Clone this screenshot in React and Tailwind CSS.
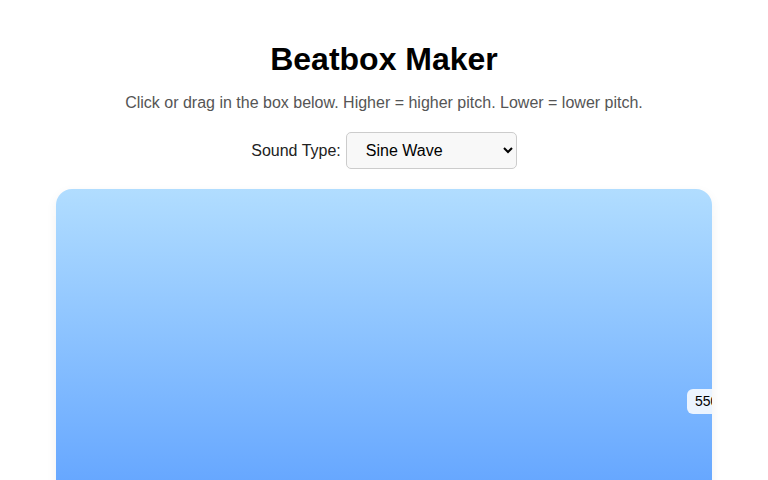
import React, { useState } from 'react'

function App() {
    const [sound, setSound] = useState('sine')

    return <div className="min-h-screen bg-white text-center" style={{ fontFamily: '"Liberation Sans", Arial, sans-serif' }}>
        <div className="pt-[41px]">
            <h1 className="text-[32px] leading-[37px] font-bold text-black">Beatbox Maker</h1>
            <p className="mt-[16px] text-[16px] leading-[18px] text-[#555]">Click or drag in the box below. Higher = higher pitch. Lower = lower pitch.</p>
            <div className="mt-[20px] flex items-center justify-center gap-[5px]">
                <label htmlFor="sound" className="text-[16px] text-[#222]">Sound Type:</label>
                <select
                    id="sound"
                    value={sound}
                    onChange={(e) => setSound(e.target.value)}
                    className="h-[37px] w-[171px] rounded-[5px] border border-[#ccc] bg-[#f8f8f8] pl-[15px] pr-[4px] text-[16px] text-black"
                >
                    <option value="sine">Sine Wave</option>
                    <option value="square">Square Wave</option>
                    <option value="sawtooth">Sawtooth Wave</option>
                    <option value="triangle">Triangle Wave</option>
                </select>
            </div>
            <div className="mx-auto mt-[20px] w-[656px] h-[400px] relative overflow-hidden rounded-[16px] bg-gradient-to-b from-[#b1ddff] to-[#4b92ff] shadow-[0_4px_12px_rgba(0,0,0,0.06)]">
                <div className="absolute left-[631px] top-[200px] h-[25px] rounded-[6px] bg-white/85 px-[8px] text-[14px] leading-[25px] text-black whitespace-nowrap">550 Hz</div>
            </div>
        </div>
    </div>
}

export default App
